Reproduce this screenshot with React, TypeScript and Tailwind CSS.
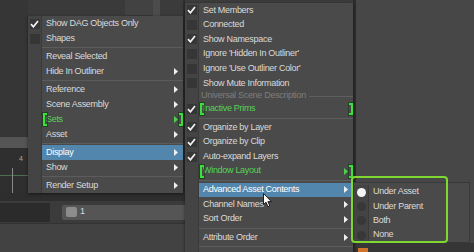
import React from "react";

type Row =
  | { kind: "item"; label: string; box?: "on" | "off"; arrow?: boolean; green?: boolean; active?: boolean }
  | { kind: "sep" }
  | { kind: "header"; label: string };

const displayMenu: Row[] = [
  { kind: "item", label: "Show DAG Objects Only", box: "on" },
  { kind: "item", label: "Shapes", box: "off" },
  { kind: "sep" },
  { kind: "item", label: "Reveal Selected" },
  { kind: "item", label: "Hide In Outliner", arrow: true },
  { kind: "sep" },
  { kind: "item", label: "Reference", arrow: true },
  { kind: "item", label: "Scene Assembly", arrow: true },
  { kind: "item", label: "Sets", arrow: true, green: true },
  { kind: "item", label: "Asset", arrow: true },
  { kind: "sep" },
  { kind: "item", label: "Display", arrow: true, active: true },
  { kind: "item", label: "Show", arrow: true },
  { kind: "sep" },
  { kind: "item", label: "Render Setup", arrow: true },
];

const subMenu: Row[] = [
  { kind: "item", label: "Set Members", box: "on" },
  { kind: "item", label: "Connected", box: "off" },
  { kind: "item", label: "Show Namespace", box: "on" },
  { kind: "item", label: "Ignore 'Hidden In Outliner'", box: "off" },
  { kind: "item", label: "Ignore 'Use Outliner Color'", box: "off" },
  { kind: "item", label: "Show Mute Information", box: "off" },
  { kind: "header", label: "Universal Scene Description" },
  { kind: "item", label: "Inactive Prims", box: "on", green: true },
  { kind: "sep" },
  { kind: "item", label: "Organize by Layer", box: "on" },
  { kind: "item", label: "Organize by Clip", box: "on" },
  { kind: "item", label: "Auto-expand Layers", box: "on" },
  { kind: "item", label: "Window Layout", arrow: true, green: true },
  { kind: "sep" },
  { kind: "item", label: "Advanced Asset Contents", arrow: true, active: true },
  { kind: "item", label: "Channel Names", arrow: true },
  { kind: "item", label: "Sort Order", arrow: true },
  { kind: "sep" },
  { kind: "item", label: "Attribute Order", arrow: true },
  { kind: "sep" },
  { kind: "item", label: "" },
];

const radios = ["Under Asset", "Under Parent", "Both", "None"];

function Tick() {
  return (
    <svg width="9" height="8" viewBox="0 0 9 8">
      <path d="M1 4.2 L3.4 6.8 L8 1" stroke="#f2f2f2" strokeWidth="1.7" fill="none" />
    </svg>
  );
}

function Arrow({ color }: { color: string }) {
  return (
    <svg width="4" height="7" viewBox="0 0 4 7" className="shrink-0">
      <path d="M0 0 L4 3.5 L0 7 Z" fill={color} />
    </svg>
  );
}

function Bracket({ side }: { side: "l" | "r" }) {
  return (
    <span
      className={
        "absolute top-[1px] bottom-[1px] w-[4px] border-y-2 border-[#3be03b] shadow-[0_0_0_1px_rgba(10,60,10,0.6)] " +
        (side === "l" ? "left-[1px] border-l-2" : "right-0 border-r-2")
      }
    />
  );
}

function MenuList({ rows, rowH, sepH }: { rows: Row[]; rowH: string; sepH: string }) {
  return (
    <>
      {rows.map((r, i) => {
        if (r.kind === "sep") {
          return (
            <div key={i} className={"flex " + sepH}>
              <div className="w-[14px] shrink-0 border-r border-[#3a3a3a] bg-[#444444]" />
              <div className="flex flex-1 items-center">
                <div className="h-px w-full bg-[#5c5c5c]" />
              </div>
            </div>
          );
        }
        if (r.kind === "header") {
          return (
            <div key={i} className="flex h-[11px]">
              <div className="w-[14px] shrink-0 border-r border-[#3a3a3a] bg-[#444444]" />
              <div className="flex flex-1 items-center pl-[2px]">
                <span className="whitespace-nowrap text-[#7e7e7e]">{r.label}</span>
                <div className="ml-[3px] h-px flex-1 bg-[#5e5e5e]" />
              </div>
            </div>
          );
        }
        return (
          <div key={i} className={"flex " + rowH}>
            <div className="flex w-[14px] shrink-0 items-center justify-center border-r border-[#3a3a3a] bg-[#444444]">
              {r.box && (
                <span className="flex h-[10px] w-[10px] items-center justify-center bg-[#363636]">
                  {r.box === "on" && <Tick />}
                </span>
              )}
            </div>
            <div
              className={
                "relative flex flex-1 items-center justify-between pl-[4px] pr-[5px] " +
                (r.active ? "bg-[#5386ad] text-white" : r.green ? "text-[#55d455]" : "text-[#dadada]")
              }
            >
              <span className="whitespace-nowrap">{r.label}</span>
              {r.arrow && <Arrow color={r.green ? "#4fd04f" : "#f0f0f0"} />}
              {r.green && <Bracket side="l" />}
              {r.green && <Bracket side="r" />}
            </div>
          </div>
        );
      })}
    </>
  );
}

export default function App() {
  return (
    <div className="relative h-[252px] w-[474px] overflow-hidden bg-[#3a3a3a] font-['Liberation_Sans',Arial,sans-serif] text-[9px] tracking-[-0.3px]">
      {/* backdrop */}
      <div className="flex h-full">
        <div className="flex w-[353px] flex-col">
          <div className="flex h-[193px]">
            <div className="flex w-[28px] flex-col">
              <div className="h-[137px] bg-[#363636]" />
              <div className="h-[12px] border-b border-[#2c2c2c] bg-[#555555]" />
              <div className="relative flex-1 bg-[#2f2f2f]">
                <span className="absolute left-[19px] top-[5px] text-[7px] text-[#a8a8a8]">4</span>
                <div className="absolute left-0 right-0 top-[26px] h-px bg-[#4d6e4d]" />
                <div className="absolute bottom-0 left-[12px] top-[19px] w-px bg-[#8a8a8a]" />
              </div>
            </div>
            <div className="flex flex-1 flex-col">
              <div className="flex h-[16px]">
                <div className="w-[97px] bg-[#3a3a3a]" />
                <div className="w-[28px] border-b border-[#383838] bg-[#424242]" />
                <div className="w-[7px] bg-[#4c4c4c]" />
                <div className="w-[23px] bg-[#3b3b3b]" />
                <div className="w-[2px] bg-[#2e2e2e]" />
                <div className="flex-1 bg-[#3c3c3c]" />
              </div>
              <div className="flex flex-1">
                <div className="w-[155px] bg-[#3b3b3b]" />
                <div className="w-[2px] bg-[#2e2e2e]" />
                <div className="flex-1 bg-[#3c3c3c]" />
              </div>
            </div>
          </div>
          <div className="flex flex-1 flex-col">
            <div className="h-[8px] bg-[#2e2e2e]" />
            <div className="flex h-[22px] items-center bg-[#3b3b3b]">
              <div className="h-[19px] w-[50px] bg-[#2b2b2b]" />
              <div className="ml-[12px] flex h-[15px] w-[130px] items-center gap-[3px] rounded-[2px] bg-[#555555] pl-[4px] text-[#d8d8d8]">
                <span className="h-[10px] w-[11px] rounded-[2px] bg-[#8c8c8c]" />
                <span>1</span>
              </div>
            </div>
            <div className="flex-1 border-t border-[#333333] bg-[#424242]" />
          </div>
        </div>
        <div className="flex flex-1 flex-col border-l-[3px] border-[#2d2d2d] bg-[#474747]">
          <div className="flex-1" />
          <div className="flex h-[9px] items-end bg-[#363636] pl-[2px]">
            <div className="h-[4px] w-[10px] bg-[#d2732b]" />
          </div>
        </div>
      </div>

      {/* outliner Display menu */}
      <div className="absolute left-[28px] top-[16px] w-[155px] bg-[#4a4a4a] shadow-[0_1px_3px_rgba(0,0,0,0.5)]">
        <MenuList rows={displayMenu} rowH="h-[15px]" sepH="h-[3px]" />
      </div>

      {/* Display submenu */}
      <div className="absolute left-[185px] top-[3px] w-[168px] bg-[#4a4a4a] shadow-[0_1px_3px_rgba(0,0,0,0.5)]">
        <MenuList rows={subMenu} rowH="h-[14.6px]" sepH="h-[4px]" />
      </div>

      {/* Advanced Asset Contents submenu */}
      <div className="absolute left-[353px] top-[182px] w-[117px] border border-[#383838] bg-[#4a4a4a] pt-[2px]">
        {radios.map((r, i) => (
          <div key={r} className="flex h-[14.3px]">
            <div className="flex w-[15px] shrink-0 items-center justify-center border-r border-[#3a3a3a] bg-[#444444]">
              <span className={"h-[9px] w-[9px] rounded-full " + (i === 0 ? "bg-[#f4f4f4]" : "bg-[#383838]")} />
            </div>
            <div className="flex flex-1 items-center pl-[4px] text-[#dadada]">{r}</div>
          </div>
        ))}
      </div>

      {/* annotation box */}
      <div className="absolute left-[351px] top-[176px] h-[67px] w-[97px] rounded-[4px] border-2 border-[#7fd832]" />

      {/* pointer */}
      <svg className="absolute left-[263px] top-[193px]" width="10" height="15" viewBox="0 0 10 15">
        <path d="M0.5 0.5 L0.5 11.5 L3 9.2 L5 13.8 L6.8 13 L4.9 8.6 L8.4 8.6 Z" fill="#ffffff" stroke="#111111" strokeWidth="0.9" />
      </svg>
    </div>
  );
}
